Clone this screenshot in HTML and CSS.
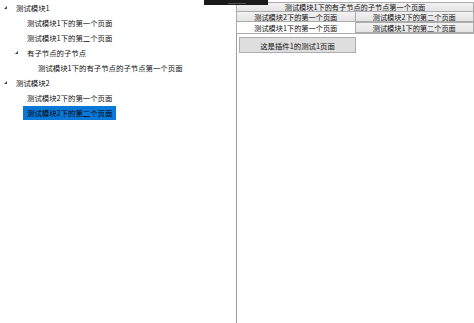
FILE: index.html
```html
<!DOCTYPE html>
<html>
<head>
    <meta charset="utf-8">
    <title>插件测试</title>
    <link rel="stylesheet" href="styles.css">
</head>
<body>
    <!-- dark handle at the top of the window -->
    <div class="grip"><span></span></div>

    <div class="shell">
        <!-- Left: module tree -->
        <ul class="tree">
            <li class="node lv0"><i class="arrow"></i><span>测试模块1</span></li>
            <li class="node lv1"><span>测试模块1下的第一个页面</span></li>
            <li class="node lv1"><span>测试模块1下的第二个页面</span></li>
            <li class="node lv1"><i class="arrow"></i><span>有子节点的子节点</span></li>
            <li class="node lv2"><span>测试模块1下的有子节点的子节点第一个页面</span></li>
            <li class="node lv0"><i class="arrow"></i><span>测试模块2</span></li>
            <li class="node lv1"><span>测试模块2下的第一个页面</span></li>
            <li class="node lv1"><span class="selected">测试模块2下的第二个页面</span></li>
        </ul>

        <!-- Right: opened pages as tabs -->
        <div class="pages">
            <div class="tab-row">
                <div class="tab">测试模块1下的有子节点的子节点第一个页面</div>
            </div>
            <div class="tab-row">
                <div class="tab">测试模块2下的第一个页面</div>
                <div class="tab">测试模块2下的第二个页面</div>
            </div>
            <div class="tab-row last">
                <div class="tab active">测试模块1下的第一个页面</div>
                <div class="tab">测试模块1下的第二个页面</div>
            </div>
            <div class="panel">
                <button class="btn">这是插件1的测试1页面</button>
            </div>
        </div>
    </div>
</body>
</html>
```

FILE: styles.css
```css
html, body {
    margin: 0;
    height: 100%;
    background: #fff;
    font-family: "Noto Sans CJK SC", "Noto Sans", sans-serif;
    font-size: 7.4px;
    color: #111;
}

.shell {
    display: flex;
    height: 100%;
}

/* tree on the left */
.tree {
    list-style: none;
    margin: 0;
    padding: 0;
    width: 236px;
    flex: none;
}
.node {
    height: 15px;
    display: flex;
    align-items: center;
    white-space: nowrap;
}
.node span {
    padding: 0 4px;
    line-height: 14px;
}
.lv0 { padding-left: 12px; }
.lv1 { padding-left: 23px; }
.lv2 { padding-left: 34px; }
.node .arrow {
    width: 0;
    height: 0;
    border-left: 3px solid transparent;
    border-bottom: 3px solid #444;
    margin-left: -8px;
    margin-right: 5px;
}
.node .selected {
    background: #0a78d7;
    color: #000;
}

/* tabs on the right */
.pages {
    flex: 1;
    display: flex;
    flex-direction: column;
    padding-top: 2px;
    border-left: 1px solid #a0a0a0;
}
.tab-row {
    display: flex;
    height: 10px;
}
.tab-row.last {
    height: 11px;
    position: relative;
    z-index: 1;
}
.tab {
    flex: 1;
    display: flex;
    align-items: center;
    justify-content: center;
    overflow: hidden;
    border: 1px solid #acacac;
    margin-left: -1px;
    margin-top: -1px;
    background: linear-gradient(#f2f2f2, #e4e4e4);
    font-size: 7.2px;
    line-height: 8px;
    white-space: nowrap;
}
.tab-row:first-child .tab { margin-top: 0; }
.tab-row.last .tab { margin-top: 0; height: 9px; }
.tab.active {
    background: #fff;
    height: 11px !important;
    border-bottom: none;
    margin-top: -1px !important;
}

.panel {
    flex: 1;
    border-top: 1px solid #acacac;
    padding: 3px 0 0 2px;
}
.btn {
    display: block;
    width: 117px;
    height: 16px;
    padding: 0;
    border: 1px solid #adadad;
    background: #dedede;
    font-family: inherit;
    font-size: 7.4px;
    color: #111;
}

/* the small dark bar at top */
.grip {
    position: absolute;
    left: 204px;
    top: 0;
    width: 64px;
    height: 5px;
    background: #1b1b1b;
    z-index: 2;
}
.grip span {
    position: absolute;
    left: 24px;
    top: 3px;
    width: 18px;
    height: 1px;
    background: #555;
}
```
